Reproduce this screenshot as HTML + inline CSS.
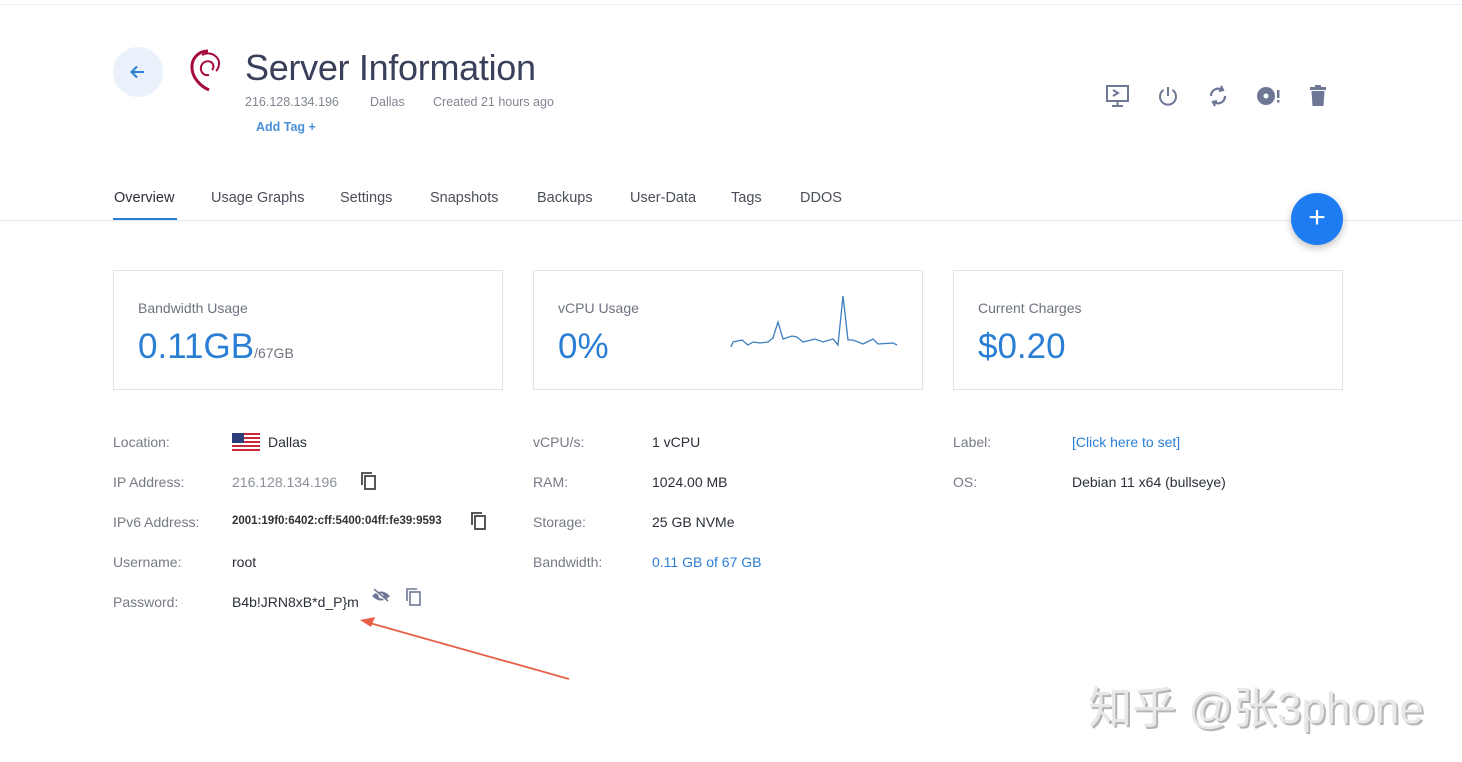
<!DOCTYPE html>
<html><head><meta charset="utf-8"><style>
body{margin:0;width:1462px;height:762px;background:#fff;font-family:"Liberation Sans",sans-serif;position:relative;overflow:hidden;color:#333}
.a{position:absolute;white-space:nowrap}
.lbl{color:#757a86;font-size:14px}
.val{color:#2a2f3a;font-size:14px}
.card{position:absolute;top:270px;width:388px;height:118px;border:1px solid #dfe3ea;background:#fff}
.card .t{position:absolute;left:24px;top:29px;font-size:14px;color:#6e7380}
.card .n{position:absolute;left:24px;top:56px;font-size:35px;color:#2a7fd4;font-weight:300}
.tab{position:absolute;top:190px;font-size:14.5px;color:#4a4f5a}
</style></head><body>
<div class="a" style="left:0;top:4px;width:1462px;height:1px;background:#eceef2"></div>
<div class="a" style="left:113px;top:47px;width:50px;height:50px;border-radius:50%;background:#eaf1fb"></div>
<svg class="a" style="left:128px;top:62px" width="20" height="20" viewBox="0 0 20 20"><path d="M16 10H4M9 4.5L3.5 10 9 15.5" fill="none" stroke="#2a7fd4" stroke-width="2"/></svg>
<svg class="a" style="left:188px;top:48px" width="36" height="46" viewBox="0 0 36 46"><path d="M20 3C10 3 3 11 4 21c1 9 8 17 17 21" fill="none" stroke="#a60a3d" stroke-width="3"/><path d="M21 27c-5 1-9-3-8-8 1-5 6-7 10-5 3 2 3 6 1 8" fill="none" stroke="#a60a3d" stroke-width="2"/><path d="M14 7c5-3 12-2 16 4 2 4 1 9-2 12" fill="none" stroke="#a60a3d" stroke-width="2"/></svg>
<div class="a" style="left:245px;top:47px;font-size:36px;letter-spacing:-0.3px;color:#3a3f5a">Server Information</div>
<div class="a" style="left:245px;top:95px;font-size:12.5px;color:#808592">216.128.134.196</div>
<div class="a" style="left:370px;top:95px;font-size:12.5px;color:#808592">Dallas</div>
<div class="a" style="left:433px;top:95px;font-size:12.5px;color:#808592">Created 21 hours ago</div>
<div class="a" style="left:256px;top:120px;font-size:12.5px;color:#4a90d9;font-weight:bold">Add Tag +</div>
<svg class="a" style="left:1105px;top:84px" width="26" height="24" viewBox="0 0 26 24" fill="none" stroke="#6e7896" stroke-width="2"><rect x="2" y="2" width="21" height="15"/><path d="M8 6l5 3-5 3M7 22h11M12.5 17v5"/></svg>
<svg class="a" style="left:1156px;top:84px" width="24" height="24" viewBox="0 0 24 24" fill="none" stroke="#6e7896" stroke-width="2"><path d="M12 3v9M7.5 6a8 8 0 1 0 9 0"/></svg>
<svg class="a" style="left:1206px;top:84px" width="24" height="24" viewBox="0 0 24 24" fill="none" stroke="#6e7896" stroke-width="2.2"><path d="M5 12a7 7 0 0 1 11-6M19 12a7 7 0 0 1-11 6"/><path d="M15 2l2 4-4 1M9 22l-2-4 4-1"/></svg>
<svg class="a" style="left:1256px;top:84px" width="26" height="24" viewBox="0 0 26 24"><circle cx="10" cy="12" r="9" fill="#6e7896"/><circle cx="10" cy="12" r="2.5" fill="#fff"/><rect x="21" y="6" width="2.5" height="8" fill="#6e7896"/><rect x="21" y="16" width="2.5" height="2.5" fill="#6e7896"/></svg>
<svg class="a" style="left:1308px;top:84px" width="20" height="24" viewBox="0 0 20 24" fill="#6e7896"><rect x="2" y="3" width="16" height="3"/><rect x="7" y="1" width="6" height="3"/><path d="M3.5 7h13l-1 15h-11z"/></svg>
<div class="tab" style="left:114px;color:#2a2f3a">Overview</div>
<div class="a" style="left:113px;top:218px;width:64px;height:2px;background:#2a7fd4"></div>
<div class="tab" style="left:211px">Usage Graphs</div>
<div class="tab" style="left:340px">Settings</div>
<div class="tab" style="left:430px">Snapshots</div>
<div class="tab" style="left:537px">Backups</div>
<div class="tab" style="left:630px">User-Data</div>
<div class="tab" style="left:731px">Tags</div>
<div class="tab" style="left:800px">DDOS</div>
<div class="a" style="left:0;top:220px;width:1462px;height:1px;background:#e4e7ec"></div>
<div class="a" style="left:1291px;top:193px;width:52px;height:52px;border-radius:50%;background:#1d7cf2;box-shadow:0 3px 8px rgba(0,0,0,.25);color:#fff;font-size:30px;text-align:center;line-height:50px">+</div>
<div class="card" style="left:113px"><div class="t">Bandwidth Usage</div><div class="n">0.11GB<span style="font-size:14px;color:#6e7380">/67GB</span></div></div>
<div class="card" style="left:533px"><div class="t">vCPU Usage</div><div class="n">0%</div></div>
<svg class="a" style="left:0;top:0" width="1462" height="762"><polyline fill="none" stroke="#3d7fc0" stroke-width="1.3" points="731,347 733,342 742,340 748,345 753,342 760,343 768,342 773,338 778,322 783,339 792,336 797,337 803,342 815,339 823,342 833,339 838,345 843,296 848,340 853,340 863,344 873,339 878,344 893,343 897,345"/>
<line x1="569" y1="679" x2="366" y2="622" stroke="#e8604a" stroke-width="1.8"/><path d="M360 620l15-3-4 10z" fill="#e8604a"/></svg>
<div class="card" style="left:953px"><div class="t">Current Charges</div><div class="n">$0.20</div></div>
<div class="a lbl" style="left:113px;top:434px">Location:</div>
<svg class="a" style="left:232px;top:433px" width="28" height="18" viewBox="0 0 28 18"><rect width="28" height="18" fill="#fff"/><g fill="#c8283a"><rect y="0" width="28" height="2"/><rect y="4" width="28" height="2"/><rect y="8" width="28" height="2"/><rect y="12" width="28" height="2"/><rect y="16" width="28" height="2"/></g><rect width="12" height="10" fill="#2b3e7a"/></svg>
<div class="a val" style="left:268px;top:434px">Dallas</div>
<div class="a lbl" style="left:113px;top:474px">IP Address:</div>
<div class="a" style="left:232px;top:474px;font-size:14px;color:#8a8f9a">216.128.134.196</div>
<div class="a lbl" style="left:113px;top:514px">IPv6 Address:</div>
<div class="a" style="left:232px;top:515px;font-size:11.5px;color:#333;font-weight:bold">2001:19f0:6402:cff:5400:04ff:fe39:9593</div>
<div class="a lbl" style="left:113px;top:554px">Username:</div>
<div class="a val" style="left:232px;top:554px">root</div>
<div class="a lbl" style="left:113px;top:594px">Password:</div>
<div class="a val" style="left:232px;top:594px">B4b!JRN8xB*d_P}m</div>
<svg class="a" style="left:371px;top:588px" width="20" height="16" viewBox="0 0 20 16"><path d="M1 8q9-9 18 0q-9 9-18 0z" fill="#6e7896"/><circle cx="10" cy="8" r="2.5" fill="#fff"/><line x1="3" y1="2" x2="17" y2="14" stroke="#fff" stroke-width="2"/><line x1="3" y1="1" x2="17" y2="13" stroke="#6e7896" stroke-width="1.5"/></svg>
<svg class="a" style="left:360px;top:471px" width="18" height="20" viewBox="0 0 18 20" fill="none" stroke="#444" stroke-width="1.8"><path d="M2 14V2h10"/><rect x="5" y="5" width="10" height="13"/></svg>
<svg class="a" style="left:470px;top:511px" width="18" height="20" viewBox="0 0 18 20" fill="none" stroke="#444" stroke-width="1.8"><path d="M2 14V2h10"/><rect x="5" y="5" width="10" height="13"/></svg>
<svg class="a" style="left:405px;top:587px" width="18" height="20" viewBox="0 0 18 20" fill="none" stroke="#6e7896" stroke-width="1.6"><path d="M2 14V2h10"/><rect x="5" y="5" width="10" height="13"/></svg>
<div class="a lbl" style="left:533px;top:434px">vCPU/s:</div><div class="a val" style="left:652px;top:434px">1 vCPU</div>
<div class="a lbl" style="left:533px;top:474px">RAM:</div><div class="a val" style="left:652px;top:474px">1024.00 MB</div>
<div class="a lbl" style="left:533px;top:514px">Storage:</div><div class="a val" style="left:652px;top:514px">25 GB NVMe</div>
<div class="a lbl" style="left:533px;top:554px">Bandwidth:</div><div class="a val" style="left:652px;top:554px;color:#2a7fd4">0.11 GB of 67 GB</div>
<div class="a lbl" style="left:953px;top:434px">Label:</div><div class="a val" style="left:1072px;top:434px;color:#2a7fd4">[Click here to set]</div>
<div class="a lbl" style="left:953px;top:474px">OS:</div><div class="a val" style="left:1072px;top:474px">Debian 11 x64 (bullseye)</div>
<div class="a" style="left:1088px;top:672px;font-size:44px;color:#e8e8e8;text-shadow:2px 2px 0 #b5b5b5;font-family:'Liberation Sans','Noto Sans CJK SC',sans-serif">知乎 @张3phone</div>
</body></html>
